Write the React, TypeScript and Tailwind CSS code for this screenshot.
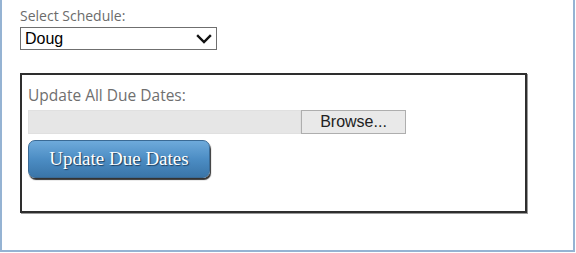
import React from 'react';

const App = () => {
  return (
    <div className="w-[576px] h-[253px] bg-white overflow-hidden">
      <div className="h-[252px] w-[575px] border-l-2 border-r-2 border-b-2 border-[#95b3d3] pl-[18px] pt-[7px]">
        <div className="text-[14px] leading-[18px] text-[#6b6b6b] font-['Open_Sans',sans-serif]">
          Select Schedule:
        </div>
        <div className="mt-[2px] w-[197px] h-[23px] border border-[#6f6f6f] flex items-center justify-between pl-[4px] pr-[4px] bg-white">
          <span className="text-[16px] text-black font-['Liberation_Sans',Arial,sans-serif]">Doug</span>
          <svg width="16" height="10" viewBox="0 0 16 10" fill="none">
            <path d="M2 2 L8 8 L14 2" stroke="#111" strokeWidth="2.4" strokeLinecap="square" />
          </svg>
        </div>

        <div className="mt-[23px] w-[507px] h-[140px] border-2 border-[#2e2e2e] shadow-[1px_1px_0_#9a9a9a] pl-[6px] pt-[11px]">
          <div className="text-[15.5px] leading-[18px] text-[#6f6f6f] font-['Open_Sans',sans-serif]">
            Update All Due Dates:
          </div>
          <div className="mt-[6px] flex h-[24px]">
            <div className="w-[273px] h-full bg-[#e6e6e6] border border-[#e0e0e0]" />
            <div className="w-[105px] h-full bg-[#e9e9e9] border border-[#aeaeae] flex items-center justify-center text-[16px] text-[#222] font-['Liberation_Sans',Arial,sans-serif]">
              Browse...
            </div>
          </div>
          <button
            type="button"
            className="mt-[6px] w-[182px] h-[38px] rounded-[7px] bg-gradient-to-b from-[#6eaadb] via-[#4c8dc4] to-[#3a75a8] border border-[#3a6a95] shadow-[1px_2px_1px_#333] text-white text-[19px] font-['Liberation_Serif',serif] [text-shadow:1px_1px_1px_#1d3f5e]"
          >
            Update Due Dates
          </button>
        </div>
      </div>
    </div>
  );
};

export default App;
